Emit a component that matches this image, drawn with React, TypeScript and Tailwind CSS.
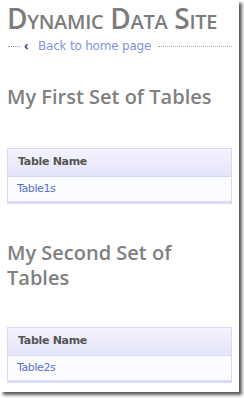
import React from 'react';

const headingFont = { fontFamily: '"Open Sans", "DejaVu Sans", sans-serif' };

function TableList({ name }: { name: string }) {
  return (
    <div className="ml-[7px] mr-[7px] border border-[#d9d9f6] border-b-0 bg-[#fafbff]">
      <div className="flex h-[28px] items-center border-b border-[#d9d9f6] bg-gradient-to-b from-[#f3f3fd] to-[#e5e5fa] pl-[10px]">
        <span className="text-[11px] font-bold tracking-[-0.3px] text-[#555]" style={{ fontFamily: '"DejaVu Sans", sans-serif' }}>
          Table Name
        </span>
      </div>
      <div className="flex h-[24px] items-center pl-[9px]">
        <a className="text-[11px] tracking-[-0.4px] text-[#5a6fc9]" style={{ fontFamily: '"DejaVu Sans", sans-serif' }}>
          {name}
        </a>
      </div>
      <div className="h-[3px] bg-[#dcdcfa]" />
    </div>
  );
}

export default function App() {
  return (
    <div className="h-[398px] w-[244px] bg-white">
      <div className="h-[392px] w-[239px] overflow-hidden bg-white shadow-[3px_3px_3px_rgba(0,0,0,0.65)]">
        <h1
          className="pl-[7px] pt-[3px] text-[28px] leading-[30px] font-semibold tracking-[-0.3px] text-[#7c7c7c] [font-variant:small-caps]"
          style={headingFont}
        >
          Dynamic Data Site
        </h1>
        <div className="mt-[5px] flex h-[16px] items-center pl-[8px] pr-[7px]">
          <div className="w-[12px] border-t border-dotted border-[#999]" />
          <span className="ml-[4px] w-[14px] text-[12px] font-bold text-[#3d4a70]">‹</span>
          <a
            className="text-[12px] tracking-[-0.2px] text-[#7f93e0]"
            style={{ fontFamily: '"DejaVu Sans", sans-serif' }}
          >
            Back to home page
          </a>
          <div className="ml-[7px] flex-1 border-t border-dotted border-[#aaa]" />
        </div>
        <h2 className="mt-[30px] pl-[7px] text-[20px] leading-[25px] font-semibold text-[#808080]" style={headingFont}>
          My First Set of Tables
        </h2>
        <div className="mt-[39px]">
          <TableList name="Table1s" />
        </div>
        <h2 className="mt-[36px] pl-[7px] pr-[50px] text-[20px] leading-[25px] font-semibold text-[#808080]" style={headingFont}>
          My Second Set of Tables
        </h2>
        <div className="mt-[37px]">
          <TableList name="Table2s" />
        </div>
      </div>
    </div>
  );
}
